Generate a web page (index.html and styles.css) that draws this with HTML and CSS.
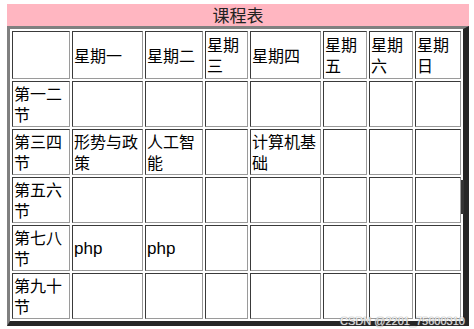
FILE: index.html
```html
<!DOCTYPE html>
<html lang="zh-CN">
<head>
<meta charset="utf-8">
<title>课程表</title>
<link rel="stylesheet" href="styles.css">
</head>
<body>
<div class="page">
  <table class="schedule">
    <caption class="title">课程表</caption>
    <tr class="head">
      <td class="c0"></td>
      <td class="c1">星期一</td>
      <td class="c2">星期二</td>
      <td class="c3">星期三</td>
      <td class="c4">星期四</td>
      <td class="c5">星期五</td>
      <td class="c6">星期六</td>
      <td class="c7">星期日</td>
    </tr>
    <tr>
      <td>第一二节</td><td></td><td></td><td></td><td></td><td></td><td></td><td></td>
    </tr>
    <tr>
      <td>第三四节</td><td>形势与政策</td><td>人工智能</td><td></td><td>计算机基础</td><td></td><td></td><td></td>
    </tr>
    <tr>
      <td>第五六节</td><td></td><td></td><td></td><td></td><td></td><td></td><td></td>
    </tr>
    <tr>
      <td>第七八节</td><td class="latin">php</td><td class="latin">php</td><td></td><td></td><td></td><td></td><td></td>
    </tr>
    <tr>
      <td>第九十节</td><td></td><td></td><td></td><td></td><td></td><td></td><td></td>
    </tr>
  </table>
  <div class="scrollmark"></div>
  <div class="watermark">CSDN @2201_75600310</div>
</div>
</body>
</html>
```

FILE: styles.css
```css
html, body {
  margin: 0;
  padding: 0;
  background: #ffffff;
}

.page {
  position: relative;
  padding: 4px 0 0 7px;
  width: 474px;
  height: 329px;
  box-sizing: border-box;
  overflow: hidden;
  font-family: "Noto Sans CJK SC", "Liberation Sans", sans-serif;
  color: #000;
}

.schedule {
  border-collapse: separate;
  border-spacing: 2px;
  border-style: solid;
  border-width: 3px 6px 5px 3px;
  border-color: #808080 #262626 #262626 #808080;
  table-layout: fixed;
  font-size: 16px;
  line-height: 21px;
}

.title {
  background: #ffb6c1;
  height: 22px;
  font-size: 17px;
  line-height: 22px;
  text-align: center;
  color: #222;
}

.schedule td {
  box-sizing: border-box;
  height: 46px;
  padding: 0 1px;
  border: 1px solid;
  border-color: #3a3a3a #9a9a9a #9a9a9a #3a3a3a;
  vertical-align: middle;
  text-align: left;
  word-break: break-all;
}

.schedule .head td {
  height: 48px;
}

.c0 { width: 58px; }
.c1 { width: 71px; }
.c2 { width: 58px; }
.c3 { width: 43px; }
.c4 { width: 71px; }
.c5 { width: 44px; }
.c6 { width: 44px; }
.c7 { width: 46px; }

.schedule td.latin {
  font-family: "Liberation Sans", Arial, sans-serif;
  font-size: 17px;
}

.scrollmark {
  position: absolute;
  left: 461px;
  top: 180px;
  width: 3px;
  height: 34px;
  background: #333;
}

.watermark {
  position: absolute;
  left: 340px;
  top: 315px;
  font-family: "Liberation Sans", Arial, sans-serif;
  font-size: 11px;
  line-height: 12px;
  color: #ffffff;
  text-shadow: 0 0 1px #777, 0 0 1px #777;
  opacity: 0.85;
  white-space: nowrap;
}
```
